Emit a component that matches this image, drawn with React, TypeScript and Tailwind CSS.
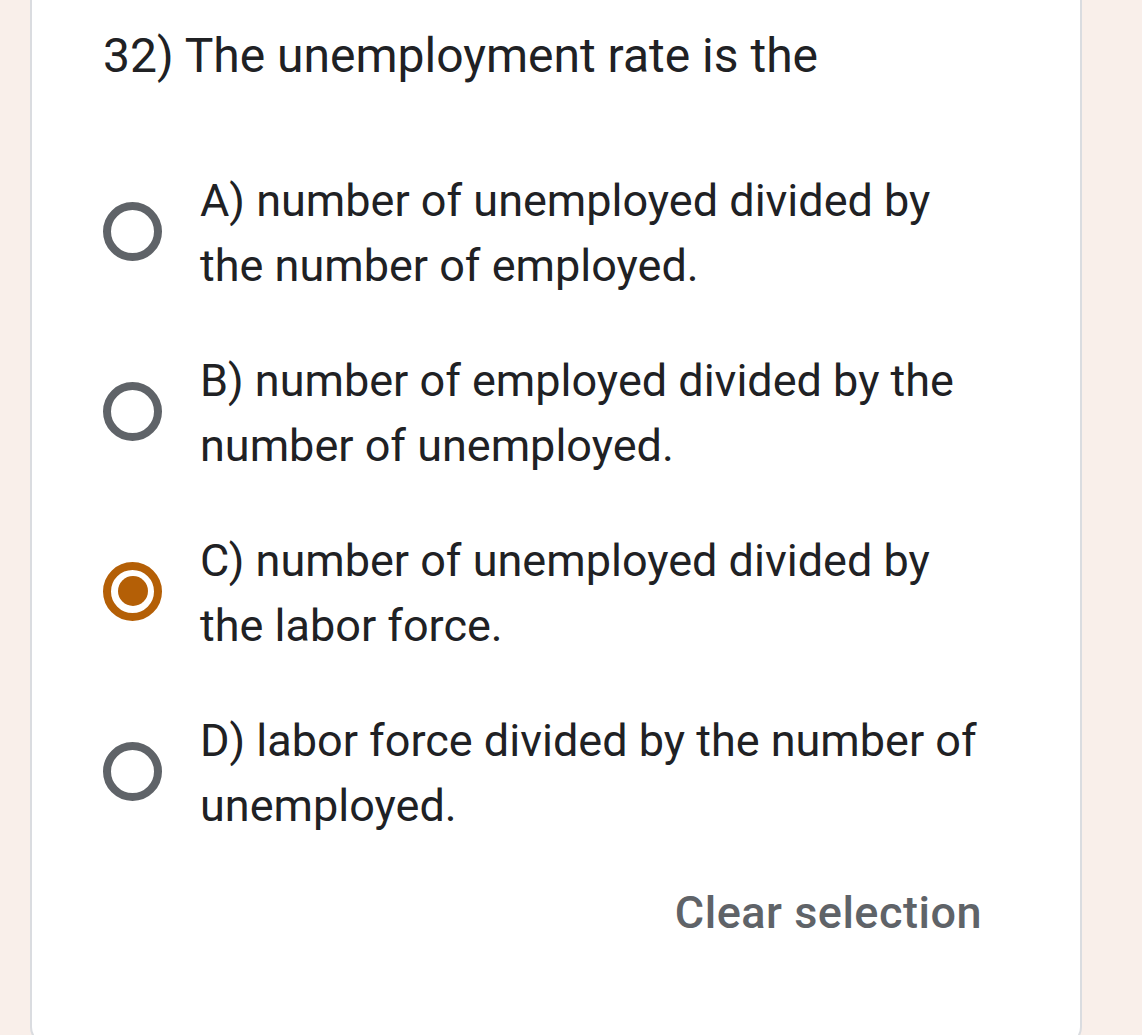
import React from "react";

const options = [
  { id: "A", lines: ["A) number of unemployed divided by", "the number of employed."] },
  { id: "B", lines: ["B) number of employed divided by the", "number of unemployed."] },
  { id: "C", lines: ["C) number of unemployed divided by", "the labor force."] },
  { id: "D", lines: ["D) labor force divided by the number of", "unemployed."] },
];

function Radio({ checked }: { checked: boolean }) {
  return (
    <div
      className={
        "w-[59px] h-[59px] -mt-[4px] rounded-full border-[8px] flex items-center justify-center shrink-0 " +
        (checked ? "border-[#b45f06]" : "border-[#5f6368]")
      }
    >
      {checked && <div className="w-[30px] h-[30px] rounded-full bg-[#b45f06]" />}
    </div>
  );
}

export default function App() {
  return (
    <div
      className="w-[1142px] h-[1035px] overflow-hidden bg-[#f9efea] pl-[30px] pr-[60px]"
      style={{ fontFamily: "Roboto, 'Noto Sans', sans-serif" }}
    >
      <div className="h-[1065px] -mt-[20px] bg-white border-x-[2px] border-b-[2px] border-[#dadce0] rounded-b-[18px] pl-[71px] pr-[60px] pt-[44px]">
        <div className="text-[48px] leading-[64px] text-[#202124] whitespace-nowrap">32) The unemployment rate is the</div>
        <div className="mt-[80px] flex flex-col gap-[50px]">
          {options.map((o) => (
            <div key={o.id} className="flex items-center">
              <Radio checked={o.id === "C"} />
              <div className="ml-[38px] text-[45px] leading-[65px] text-[#202124] whitespace-nowrap">
                {o.lines.map((l) => (
                  <div key={l}>{l}</div>
                ))}
              </div>
            </div>
          ))}
        </div>
        <div className="mt-[42px] flex justify-end pr-[38px]">
          <div className="text-[45px] leading-[66px] font-medium tracking-[0.5px] text-[#5f6368] whitespace-nowrap">Clear selection</div>
        </div>
      </div>
    </div>
  );
}
